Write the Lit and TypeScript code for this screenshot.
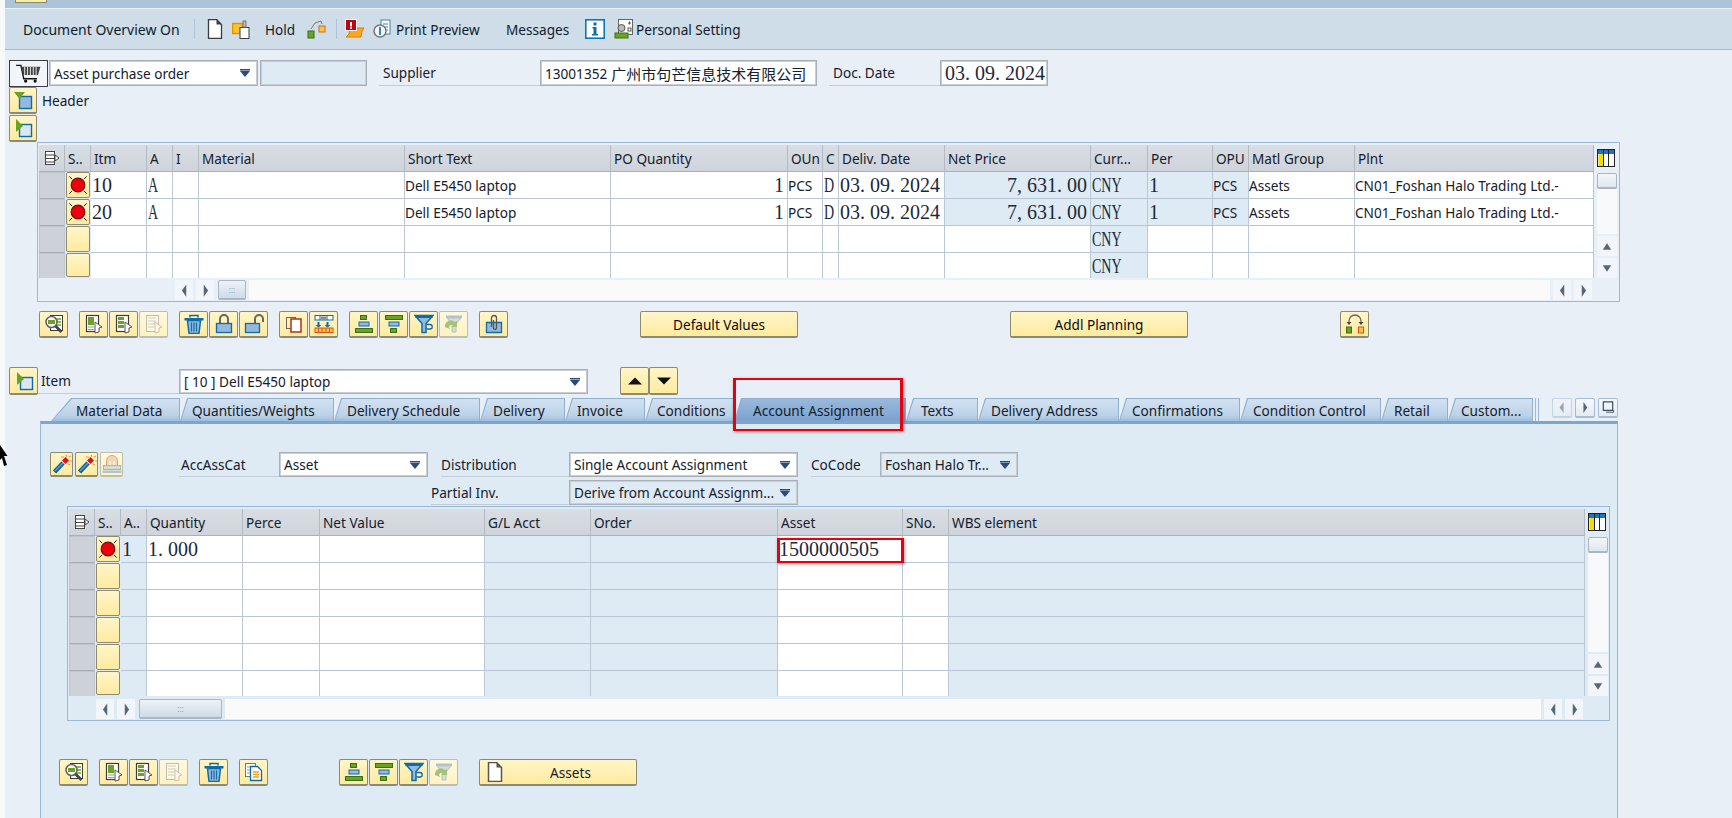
import { LitElement, css, html, TemplateResult } from "lit";
import { customElement } from "lit/decorators.js";

type Cell = { t: string; k?: "s" | "n" | "c"; r?: boolean; b?: boolean };
const s = (t: string, b = false): Cell => ({ t, k: "s", b });
const n = (t: string, b = false, r = false): Cell => ({ t, k: "n", b, r });
const c = (t: string, b = false): Cell => ({ t, k: "c", b });
const e = (b = false): Cell => ({ t: "", b });

const D = "#3c3c3c";
const G = "#6aa321";
const B = "#0f6ca6";
const L = "#93b9dd";

const wand = html`<svg viewBox="0 0 20 20"><path d="M2.500 18L11 9" stroke="#0f5f96" stroke-width="4.500"/><path d="M3 17l8-8" stroke="#5b9fd6" stroke-width="1.500"/><path d="M13.500 3l3.500 3.500-3.500 3.500-3.500-3.500z" fill="#e0101e"/><path d="M9 3h3M14 1l1 2M17 3l2-1M18 7h2M16 10l2 1" stroke="#f09a1a" stroke-width="1.100"/></svg>`;

const icons: Record<string, TemplateResult> = {
  doc: html`<svg viewBox="0 0 20 20"><path d="M3.500 .5h8l5 5v14h-13z" fill="#fff" stroke="${D}" stroke-width="1.300"/><path d="M11.500 .5l5 5h-5z" fill="${D}"/></svg>`,
  hold: html`<svg viewBox="0 0 20 20"><rect x=".5" y="4.500" width="10" height="10" fill="#fbc52b" stroke="#ef8a00" stroke-width="1.400"/><rect x="8" y="8.500" width="9" height="11" fill="#fff" stroke="${D}"/><rect x="11" y="2" width="3" height="6" fill="#bbb" stroke="#777"/></svg>`,
  flow: html`<svg viewBox="0 0 20 20"><rect x="1" y="12" width="6" height="7" fill="${G}" stroke="#356b1a"/><rect x="12" y="7" width="6" height="6" fill="#f9c544" stroke="#d8662a"/><path d="M4 10L8 4l6-2M14 2l1 3" fill="none" stroke="#777"/></svg>`,
  msg: html`<svg viewBox="0 0 20 20"><path d="M5 9h14l-2 3-1 6H1l3-3z" fill="#f7a81b" stroke="#e97a00"/><rect x=".5" y=".5" width="11" height="11" fill="#c40012" stroke="#fff"/><rect x="5" y="3" width="2" height="4.500" fill="#fff"/><rect x="5" y="8.300" width="2" height="1.600" fill="#fff"/></svg>`,
  print: html`<svg viewBox="0 0 20 20"><rect x="8" y="1" width="9" height="14" fill="#fff" stroke="#3d82ad"/><path d="M10 5h5M10 8h5M10 11h5" stroke="#3d82ad"/><circle cx="7" cy="12" r="6" fill="#f2f5f8" stroke="#777" stroke-width="1.500"/><path d="M7 8v8" stroke="#3d82ad" stroke-width="2"/></svg>`,
  info: html`<svg viewBox="0 0 20 20"><rect x=".8" y=".8" width="18.400" height="18.400" fill="#fff" stroke="#0a78b8" stroke-width="1.600"/><rect x="8.500" y="3.500" width="3" height="3" fill="#0a6fae"/><path d="M7.500 8h4v7h1.500v1.500h-6V15h1.500V9.500h-1z" fill="#0a6fae"/></svg>`,
  pers: html`<svg viewBox="0 0 20 20"><rect x="4.500" y=".5" width="14" height="15" fill="#fff" stroke="#666"/><rect x="1" y="14" width="13" height="5" fill="${G}" stroke="#3d6f1b"/><circle cx="7.500" cy="9" r="3.500" fill="#bbb" stroke="#555"/><path d="M14 4h3M15.500 2.500v3" stroke="#555"/><rect x="14" y="9" width="3" height="3" fill="none" stroke="#555"/></svg>`,
  cart: html`<svg viewBox="0 0 26 20"><path d="M0 1.500h5l3 14h14" fill="none" stroke="#111" stroke-width="1.400"/><path d="M5.500 3h20L23 11.500H7.500z" fill="#444"/><path d="M9 3v8.500M12 3v8.500M15 3v8.500M18 3v8.500M21 3v8.500" stroke="#eee"/><circle cx="10" cy="18" r="1.700" fill="#111"/><circle cx="20" cy="18" r="1.700" fill="#111"/></svg>`,
  head: html`<svg viewBox="0 0 20 20"><rect x="6.500" y="6.500" width="12" height="12" fill="${L}" stroke="${B}" stroke-width="1.400"/><path d="M1 2h11L6.500 9z" fill="${G}"/></svg>`,
  exp: html`<svg viewBox="0 0 20 20"><rect x="6.500" y="6.500" width="12" height="12" fill="#dbe8f4" stroke="${B}" stroke-width="1.400"/><path d="M3 1v13l7-6z" fill="${G}"/></svg>`,
  detail: html`<svg viewBox="0 0 20 20"><rect x="6.500" y="1.500" width="12" height="15" fill="#fff" stroke="${D}"/><path d="M12 5h5M12 8h5M12 11h5" stroke="${G}" stroke-width="1.400"/><circle cx="7.500" cy="8" r="5.500" fill="#fff" stroke="#666" stroke-width="1.600"/><rect x="4" y="6" width="7" height="4" fill="${G}"/><path d="M11.500 12l6 6" stroke="#444" stroke-width="2.800"/></svg>`,
  selAll: html`<svg viewBox="0 0 20 20"><rect x="2.500" y="1.500" width="12" height="16" fill="#fff" stroke="${D}" stroke-width="1.200"/><rect x="4" y="3" width="6" height="8" fill="${G}"/><path d="M4 13h6M4 15.500h6" stroke="#999"/><path d="M11 8l7 5-3 1v4l-4 1z" fill="#fff" stroke="#555"/></svg>`,
  selBlk: html`<svg viewBox="0 0 20 20"><rect x="2.500" y="1.500" width="12" height="16" fill="#fff" stroke="${D}" stroke-width="1.200"/><path d="M4 3h6v3H4zM4 7h6v3H4zM4 11h6v3H4z" fill="${G}"/><path d="M11 8l7 5-3 1v4l-4 1z" fill="#fff" stroke="#555"/></svg>`,
  selOff: html`<svg viewBox="0 0 20 20" opacity=".45"><rect x="2.500" y="1.500" width="12" height="16" fill="#fff" stroke="#777"/><path d="M4 4h8M4 7h8M4 10h8M4 13h6" stroke="#999"/><path d="M11 8l7 5-3 1v4l-4 1z" fill="#fff" stroke="#888"/></svg>`,
  trash: html`<svg viewBox="0 0 20 20"><path d="M6 3.500V1.500h8v2" fill="none" stroke="${B}" stroke-width="1.500"/><path d="M.5 4h19v2.500H.5z" fill="${B}"/><path d="M3.500 6.500h13l-1.500 13H5z" fill="${L}" stroke="${B}" stroke-width="1.500"/><path d="M7.500 8.500v9M10 8.500v9M12.500 8.500v9" stroke="${B}" stroke-width="1.200"/></svg>`,
  lock: html`<svg viewBox="0 0 20 20"><path d="M6 10V5a4 4 0 018 0v5" fill="none" stroke="#666" stroke-width="2"/><rect x="2.500" y="9.500" width="15" height="9" fill="${L}" stroke="${B}" stroke-width="1.300"/></svg>`,
  unlock: html`<svg viewBox="0 0 20 20"><path d="M11 9V5a4 4 0 018 0v3" fill="none" stroke="#666" stroke-width="2"/><rect x="1.500" y="9.500" width="14" height="9" fill="${L}" stroke="${B}" stroke-width="1.300"/></svg>`,
  copy: html`<svg viewBox="0 0 20 20"><rect x="2.500" y="3.500" width="9" height="11" fill="none" stroke="#666"/><rect x="7" y="5" width="10" height="13" fill="#fff" stroke="#b2321a" stroke-width="1.500"/></svg>`,
  matrix: html`<svg viewBox="0 0 20 20"><rect x="1" y="1.500" width="18" height="4.500" fill="#fff" stroke="${B}"/><path d="M6 1.500v4.500M13 1.500v4.500" stroke="${B}"/><rect x="7" y="2.500" width="5" height="3" fill="#888"/><path d="M3.500 8v3h-2l3 2.500 3-2.500h-2V8zM12.500 8v3h-2l3 2.500 3-2.500h-2V8z" fill="${B}"/><rect x="1" y="14" width="18" height="4.500" fill="#f9c544" stroke="#d8521a"/><path d="M4.500 14v4.500M8 14v4.500M12 14v4.500M15.500 14v4.500" stroke="#d8521a"/></svg>`,
  asc: html`<svg viewBox="0 0 20 20"><rect x="6.500" y="1.500" width="6" height="4" fill="${G}" stroke="#3d6f1b"/><rect x="5" y="8" width="10" height="4" fill="${L}" stroke="${B}"/><rect x="1.500" y="14.500" width="17" height="4" fill="${G}" stroke="#3d6f1b"/></svg>`,
  desc: html`<svg viewBox="0 0 20 20"><rect x="1.500" y="1.500" width="17" height="4" fill="${G}" stroke="#3d6f1b"/><rect x="5" y="8" width="10" height="4" fill="${L}" stroke="${B}"/><rect x="6.500" y="14.500" width="6" height="4" fill="${G}" stroke="#3d6f1b"/></svg>`,
  filter: html`<svg viewBox="0 0 20 20"><path d="M1 1.500h18l-7 8v9H8v-9z" fill="${L}" stroke="${B}" stroke-width="1.500"/><path d="M1.500 1.500h17v2.500h-17z" fill="${B}"/><path d="M12.500 10.500h3.500a2 2 0 010 4.500h-3.500" fill="none" stroke="${B}" stroke-width="1.300"/></svg>`,
  filterOff: html`<svg viewBox="0 0 20 20" opacity=".6"><path d="M2 1.500h16v2.500H2z" fill="#7ea4bd"/><path d="M3 4h14l-5 6v8H8v-8z" fill="#b5cfe2" stroke="#7ea4bd"/><path d="M1 13a6 6 0 0110-5l2-1v6H7l2-2a3 3 0 00-4 2l1 2z" fill="#6f9f3f"/></svg>`,
  clip: html`<svg viewBox="0 0 20 20"><path d="M2.500 8.500h15v10h-15z" fill="${L}" stroke="${B}" stroke-width="1.300"/><path d="M7.500 13V4a2.500 2.500 0 015 0v10a1.500 1.500 0 01-3 0V6" fill="none" stroke="#555" stroke-width="1.300"/></svg>`,
  resp: html`<svg viewBox="0 0 20 20"><path d="M4 10V7a6 6 0 0112 0v3" fill="none" stroke="#666" stroke-width="1.300"/><path d="M1.500 8h5L4 11zM13.500 8h5L16 11z" fill="#444"/><rect x="1.500" y="13" width="5" height="6" fill="${G}" stroke="#3d6f1b"/><rect x="13.500" y="13" width="5" height="6" fill="#f9c544" stroke="#d8521a"/></svg>`,
  newDoc: html`<svg viewBox="0 0 20 20"><path d="M3.500 .5h8l5 5v14h-13z" fill="#fff" stroke="#555" stroke-width="1.500"/><path d="M11.500 .5l5 5h-5z" fill="#555"/></svg>`,
  copyDoc: html`<svg viewBox="0 0 20 20"><rect x="1.500" y="1.500" width="10" height="13" fill="#fff" stroke="#777"/><path d="M3 5h6M3 8h6M3 11h6" stroke="#999"/><path d="M6.500 4.500h7l4 4v10h-11z" fill="#fff" stroke="${B}" stroke-width="1.300"/><path d="M9 10h6M9 12.500h6M9 15h6" stroke="#f0a020" stroke-width="1.400"/></svg>`,
  wand,
  stamp: html`<svg viewBox="0 0 20 20" opacity=".7"><path d="M4.500 12V7a5.500 5.500 0 0111 0v5" fill="#f3c4a4" stroke="#c9885c"/><path d="M8 12V7M12 12V7" stroke="#fff" stroke-width="1.500"/><rect x="1.500" y="11.500" width="17" height="4" fill="#c8d4dc" stroke="#8a9aa8"/><rect x=".5" y="16.500" width="19" height="2.500" fill="#8fb4d2"/></svg>`,
  cols: html`<svg viewBox="0 0 18 18"><rect x=".5" y=".5" width="17" height="17" fill="#fff" stroke="#222"/><rect x="1" y="1" width="16" height="4" fill="#1f74bd"/><rect x="1.500" y="5" width="4.500" height="12" fill="#f4dc00"/><path d="M6.500 1v16M11.500 1v16" stroke="#222"/></svg>`,
  status: html`<svg viewBox="0 0 22 24"><path d="M1.500 2.500l3 3M20.500 2.500l-3 3M1.500 21.500l3-3M20.500 21.500l-3-3" stroke="#222" stroke-width="1.100"/><circle cx="11" cy="12" r="7.500" fill="#f0000f" stroke="#6e0a0f" stroke-width="1.300"/></svg>`,
  dd: html`<svg viewBox="0 0 10 8"><rect width="10" height="1.500" fill="#2b4a78"/><path d="M0 2h10L5 8z" fill="#2b4a78"/></svg>`,
  up: html`<svg viewBox="0 0 20 20"><path d="M10 6.500l7 7H3z" fill="#111"/></svg>`,
  down: html`<svg viewBox="0 0 20 20"><path d="M3 6.500h14l-7 7z" fill="#111"/></svg>`,
  sl: html`<svg viewBox="0 0 8 14"><path d="M6 0v14L1 7z" fill="#56677a"/></svg>`,
  sr: html`<svg viewBox="0 0 8 14"><path d="M2 0v14l5-7z" fill="#56677a"/></svg>`,
  su: html`<svg viewBox="0 0 12 8"><path d="M6 0l5 8H1z" fill="#56677a"/></svg>`,
  sd: html`<svg viewBox="0 0 12 8"><path d="M1 0h10L6 8z" fill="#56677a"/></svg>`,
  head2: html`<svg viewBox="0 0 16 16"><rect x="1.500" y="1.500" width="9" height="13" fill="#fff" stroke="#444"/><path d="M1.500 5h9M1.500 8.500h9M1.500 12h9" stroke="#444"/><path d="M11 5l4 3-4 3z" fill="#fff" stroke="#444"/></svg>`,
  tabList: html`<svg viewBox="0 0 16 16"><path d="M3 2h10v9H3z" fill="none" stroke="#3d4f63" stroke-width="1.300"/><path d="M6 13h8v-2" fill="none" stroke="#3d4f63"/></svg>`,
};

const COLS1 = [26, 26, 56, 26, 26, 206, 206, 177, 35, 16, 106, 146, 57, 65, 36, 106, 239];
const HEAD1 = ["S..", "Itm", "A", "I", "Material", "Short Text", "PO Quantity", "OUn", "C", "Deliv. Date", "Net Price", "Curr...", "Per", "OPU", "Matl Group", "Plnt"];
const item = (no: string): Cell[] => [
  n(no), c("A"), e(), e(), s("Dell E5450 laptop"), n("1", false, true), s("PCS"), c("D"),
  n("03. 09. 2024"), n("7, 631. 00", true, true), c("CNY", true), n("1", true), s("PCS", true),
  s("Assets"), s("CN01_Foshan Halo Trading Ltd.-"),
];
const blank1 = (): Cell[] => HEAD1.slice(1).map((h) => (h === "Curr..." ? c("CNY", true) : e()));
const ROWS1 = [
  { status: true, cells: item("10") },
  { status: true, cells: item("20") },
  { status: false, cells: blank1() },
  { status: false, cells: blank1() },
];

const COLS2 = [26, 26, 26, 96, 77, 165, 106, 187, 125, 46, 636];
const HEAD2 = ["S..", "A..", "Quantity", "Perce", "Net Value", "G/L Acct", "Order", "Asset", "SNo.", "WBS element"];
const blank2 = (): Cell[] => [e(true), e(), e(), e(), e(true), e(true), e(), e(), e(true)];
const ROWS2 = [
  {
    status: true,
    cells: [n("1", true), n("1. 000"), e(), e(), e(true), e(true), n("1500000505"), e(), e(true)],
  },
  ...[0, 1, 2, 3, 4].map(() => ({ status: false, cells: blank2() })),
];

const TABS = [
  ["Material Data", 129, 24],
  ["Quantities/Weights", 154, 11],
  ["Delivery Schedule", 146, 12],
  ["Delivery", 85, 12],
  ["Invoice", 80, 11],
  ["Conditions", 89, 11],
  ["Account Assignment", 172, 18],
  ["Texts", 72, 14],
  ["Delivery Address", 141, 12],
  ["Confirmations", 121, 12],
  ["Condition Control", 141, 12],
  ["Retail", 67, 12],
  ["Custom...", 85, 12],
] as const;

@customElement("app-root")
export class AppRoot extends LitElement {
  static styles = css`
    :host {
      display: block;
      position: relative;
      width: 1732px;
      height: 818px;
      overflow: hidden;
      background: #f7f9fb;
      color: #14202c;
      font-family: "Noto Sans", "Noto Sans CJK SC", sans-serif;
      font-size: 13.6px;
    }
    svg {
      display: block;
      width: 100%;
      height: 100%;
    }
    .page {
      margin-left: 5px;
      height: 818px;
      background: #e8eff7;
    }
    .topbar {
      height: 8px;
      background: #adc3da;
      padding-left: 10px;
    }
    .topstub {
      width: 32px;
      height: 3px;
      background: #fdeca6;
      border: 1px solid #8c8a70;
      border-top: 0;
      box-sizing: border-box;
    }
    .toolbar {
      display: grid;
      grid-template-columns: 171px 11px 27px 33px 42px 29px 9px 28px 23px 110px 79px 29px 22px auto;
      align-items: center;
      height: 40px;
      margin-top: 1px;
      padding-left: 18px;
      background: #cedde8;
      border-bottom: 1px solid #a9b8c5;
      color: #0e1c2c;
      white-space: nowrap;
    }
    .toolbar .first {
      font-size: 14px;
    }
    .tbi {
      width: 20px;
      height: 20px;
    }
    .tsep {
      width: 1px;
      height: 20px;
      background: #aec4d8;
    }

    .docrow {
      display: flex;
      height: 27px;
      margin-top: 10px;
      padding-left: 4px;
    }
    .cartbtn {
      width: 39px;
      height: 27px;
      box-sizing: border-box;
      border: 1px solid #3a3f45;
      background: #f1f4f8;
      padding: 3px 5px;
      margin-right: 1px;
    }
    .field {
      display: flex;
      align-items: center;
      box-sizing: border-box;
      height: 26px;
      border: 1px solid #a9b0b8;
      outline: 1px solid #c9ced4;
      outline-offset: -2px;
      background: #fff;
      padding-left: 4px;
      white-space: nowrap;
      overflow: hidden;
      flex: none;
    }
    .field .val {
      flex: 1;
      overflow: hidden;
    }
    .field .ddarrow {
      width: 10px;
      height: 8px;
      margin: 0 7px 0 4px;
      flex: none;
    }
    .field.ro {
      background: #deeaf4;
    }
    .cjk {
      font-size: 15px;
      margin-left: 4px;
    }
    .w209 { width: 209px; margin-right: 2px; }
    .w107 { width: 107px; margin-right: 12px; }
    .w277 { width: 277px; margin-right: 12px; }
    .w108 { width: 108px; }
    .label {
      display: flex;
      align-items: center;
      box-sizing: border-box;
      height: 26px;
      padding-left: 4px;
      border-bottom: 1px solid #c3cdd8;
      flex: none;
    }
    .w161 { width: 161px; }
    .w111 { width: 111px; }
    .serif {
      font-family: "Liberation Serif", serif;
      font-size: 20px;
      line-height: 26px;
      color: #1b2a3a;
    }
    .btn {
      display: flex;
      align-items: center;
      justify-content: center;
      box-sizing: border-box;
      width: 29px;
      height: 27px;
      flex: none;
      border: 1px solid #8c8a70;
      border-bottom-width: 2px;
      border-radius: 2px;
      background: linear-gradient(#fff5c8, #ffeb9f);
    }
    .btn > .i {
      width: 20px;
      height: 20px;
    }
    .btn.off {
      border-color: #bfbea8;
      background: linear-gradient(#fff9e0, #fff2c4);
    }
    .btn.txt {
      color: #0c0c0c;
    }
    .hdrrow {
      display: flex;
      align-items: center;
      height: 27px;
      padding-left: 4px;
    }
    .hdrrow .btn {
      width: 28px;
      margin-right: 5px;
    }
    .hdr2 {
      height: 27px;
      margin-top: 1px;
      padding-left: 4px;
    }
    .hdr2 .btn {
      width: 28px;
    }

    .box {
      box-sizing: border-box;
      border: 1px solid #9bb9d6;
    }
    .box1 {
      width: 1583px;
      height: 160px;
      margin-left: 32px;
      padding: 2px 2px 0 1px;
    }
    .box2 {
      width: 1543px;
      height: 215px;
      margin: 1px 0 0 17px;
      padding: 2px 2px 0 1px;
    }
    .tblwrap {
      display: flex;
      gap: 3px;
    }
    .row {
      display: grid;
    }
    .hc {
      display: flex;
      align-items: center;
      box-sizing: border-box;
      height: 27px;
      padding-left: 3px;
      background: linear-gradient(#d9dde4, #cfd4dc);
      border-right: 1px solid #b4bac3;
      border-bottom: 1px solid #a9b1bb;
      white-space: nowrap;
      overflow: hidden;
    }
    .hc .corner {
      width: 16px;
      height: 16px;
    }
    .hc.c0 {
      padding-left: 5px;
    }
    .bc {
      display: flex;
      align-items: center;
      box-sizing: border-box;
      height: 27px;
      background: #fff;
      border-right: 1px solid #bcc7d6;
      border-bottom: 1px solid #b9c5d3;
      white-space: nowrap;
      overflow: hidden;
      padding-left: 0;
    }
    .bc.n {
      padding-left: 1px;
    }
    .bc.blue {
      background: #deeaf4;
    }
    .bc.right {
      justify-content: flex-end;
      padding: 0 3px 0 0;
    }
    .row.last .bc,
    .row.last .sel,
    .row.last .st {
      height: 25px;
      border-bottom: 0;
    }
    .sel {
      box-sizing: border-box;
      height: 27px;
      background: #cdd2d9;
      border: 1px solid #bfc5cc;
      border-bottom-color: #a6adb6;
    }
    .st {
      box-sizing: border-box;
      height: 27px;
      padding: 0 0 1px 1px;
      background: #deeaf4;
    }
    .st .btn {
      width: 24px;
      height: 100%;
      border-width: 1px;
      padding: 1px;
    }
    .squeeze {
      display: inline-block;
      transform: scaleX(0.7);
      transform-origin: left center;
    }
    .vs {
      display: flex;
      flex-direction: column;
      width: 20px;
      flex: none;
    }
    .vs .cfg {
      width: 18px;
      height: 18px;
      margin: 4px 0 6px;
      flex: none;
    }
    .vs .thumb {
      box-sizing: border-box;
      height: 16px;
      flex: none;
      border: 1px solid #a9b6c4;
      border-bottom-width: 2px;
      background: linear-gradient(#f4f7fa, #dde6ef);
      border-radius: 2px;
    }
    .vs .track {
      flex: 1;
      background: #f8f9fb;
    }
    .vs .sb {
      height: 20px;
      flex: none;
      margin-top: 2px;
      background: #f2f5f9;
      display: flex;
      align-items: center;
      justify-content: center;
    }
    .sb > span {
      display: block;
      width: 10px;
      height: 7px;
    }
    .hs {
      display: flex;
      box-sizing: border-box;
      height: 20px;
      gap: 3px;
      margin-top: 2px;
    }
    .hs .sb {
      width: 18px;
      flex: none;
      background: #f2f5f9;
      display: flex;
      align-items: center;
      justify-content: center;
    }
    .hs .sb > span {
      width: 7px;
      height: 13px;
    }
    .hs .thumb {
      box-sizing: border-box;
      flex: none;
      margin-left: 1px;
      border: 1px solid #a9b6c4;
      border-bottom-width: 2px;
      border-radius: 2px;
      background: linear-gradient(#eef2f6, #cfdbe6);
      display: flex;
      align-items: center;
      justify-content: center;
      color: #8a98a6;
      font-size: 8px;
      line-height: 8px;
    }
    .hs .track {
      flex: 1;
      background: #fafafa;
    }
    .hs1 { padding: 0 2px 0 136px; width: 1555px; }
    .hs2 { padding: 0 2px 0 27px; width: 1516px; margin-top: 3px; }
    .hs1 .thumb { width: 28px; }
    .hs2 .thumb { width: 83px; }

    .tools {
      display: flex;
      margin-top: 9px;
      margin-left: 34px;
    }
    .grp {
      display: flex;
      gap: 1px;
      margin-right: 11px;
    }
    .tools .txt {
      width: 158px;
    }
    .tools .txt.def {
      margin-left: 121px;
    }
    .tools .txt.addl {
      width: 178px;
      margin-left: 212px;
    }
    .tools .resp {
      margin-left: 152px;
    }
    .itemrow {
      display: flex;
      height: 28px;
      margin-top: 29px;
      margin-left: 4px;
    }
    .itemrow .btn {
      height: 28px;
    }
    .itemrow .label {
      width: 141px;
      height: 27px;
      padding-left: 3px;
    }
    .itemrow .field {
      width: 409px;
      height: 25px;
      margin: 2px 32px 0 0;
    }
    .tabs {
      display: flex;
      height: 23px;
      margin: 3px 0 0 46px;
    }
    .tab {
      box-sizing: border-box;
      padding: 1px 1px 0;
      background: #8fb0d0;
      flex: none;
      clip-path: polygon(var(--sl) 0, 100% 0, 100% 100%, 0 100%);
    }
    .tabin {
      display: flex;
      align-items: center;
      height: 100%;
      background: linear-gradient(#d2e1f0, #bcd2e8 75%, #9dbcda);
      clip-path: polygon(var(--sl) 0, 100% 0, 100% 100%, 0 100%);
      white-space: nowrap;
      box-sizing: border-box;
    }
    .tab.on .tabin {
      background: linear-gradient(#9ab9dc, #7aa2cf);
    }
    .tabend {
      width: 5px;
      margin-right: 13px;
      flex: none;
      border-right: 1px solid #9bb9d6;
      box-shadow: inset -2px 0 0 #e8eff7, inset -3px 0 0 #9bb9d6;
    }
    .tabnav {
      display: flex;
      gap: 3px;
    }
    .nb {
      box-sizing: border-box;
      width: 20px;
      height: 20px;
      border: 1px solid #a7bdd3;
      border-bottom-width: 2px;
      border-radius: 2px;
      background: linear-gradient(#f6f9fc, #e2ebf4);
      padding: 3px 5px;
    }
    .nb.dim {
      opacity: 0.55;
    }
    .nb.list {
      padding: 1px;
    }
    .panel {
      box-sizing: border-box;
      width: 1578px;
      height: 397px;
      margin-left: 35px;
      border: 1px solid #9bb9d6;
      border-top: 3px solid #7ea5cc;
      border-bottom: 0;
      background: #deeaf4;
      padding-top: 28px;
      padding-left: 9px;
    }
    .assign {
      display: grid;
      grid-template-columns: 129px 100px 149px 13px 128px 229px 13px 69px 138px;
      grid-auto-rows: 25px;
      row-gap: 3px;
    }
    .wands {
      display: flex;
      gap: 2px;
    }
    .wands .btn {
      width: 23px;
      height: 25px;
    }
    .assign .label,
    .assign .field {
      height: 25px;
      width: auto;
    }
    .assign .label {
      padding-left: 0;
    }
    .assign .label.acc {
      padding-left: 2px;
    }
    .partial {
      grid-column: 4 / 6;
      margin-left: 3px;
    }
    .g6 {
      grid-column: 6;
    }
    .g5 {
      grid-column: 5;
    }
    .g8 {
      grid-column: 8;
    }
    .tools.t2 {
      margin: 38px 0 0 9px;
    }
    .tools.t2 .gap71 {
      margin-right: 71px;
    }
    .tools.t2 .gap21 {
      margin-right: 21px;
    }
    .assets {
      display: grid;
      grid-template-columns: 20px 1fr;
      align-items: center;
      width: 158px;
      padding-left: 5px;
    }
    .assets span:last-child {
      text-align: center;
    }
    .mark {
      position: absolute;
      box-sizing: border-box;
      border: 2px solid #e8000f;
      box-shadow: 1px 1px 3px rgba(0, 0, 0, 0.4);
      pointer-events: none;
    }
    .mark.tab-mark {
      left: 733px;
      top: 378px;
      width: 170px;
      height: 53px;
      border-width: 2px 3px;
    }
    .mark.asset-mark {
      left: 777px;
      top: 538px;
      width: 127px;
      height: 25px;
      border-width: 2px 3px;
    }
    .pointer {
      position: absolute;
      left: 0;
      top: 445px;
      width: 8px;
      height: 21px;
    }
  `;

  private ic(name: string) {
    return html`<span class="i">${icons[name]}</span>`;
  }

  private btn(name: string, off = false) {
    return html`<div class="btn ${off ? "off" : ""}">${this.ic(name)}</div>`;
  }

  private cell(x: Cell) {
    const cls = `bc ${x.b ? "blue" : ""} ${x.r ? "right" : ""} ${x.k === "s" ? "" : "n"}`;
    if (x.k === "n") return html`<div class=${cls}><span class="serif">${x.t}</span></div>`;
    if (x.k === "c") return html`<div class=${cls}><span class="serif squeeze">${x.t}</span></div>`;
    return html`<div class=${cls}>${x.t}</div>`;
  }

  private grid(
    cols: number[],
    head: string[],
    rows: { status: boolean; cells: Cell[] }[],
    scrollCls: string,
  ) {
    const tpl = `grid-template-columns:${cols.map((w) => w + "px").join(" ")}`;
    return html`
      <div class="tblwrap">
        <div>
          <div class="row" style=${tpl}>
            <div class="hc c0"><span class="corner">${icons.head2}</span></div>
            ${head.map((h) => html`<div class="hc">${h}</div>`)}
          </div>
          ${rows.map(
            (r, i) => html`<div class="row ${i === rows.length - 1 ? "last" : ""}" style=${tpl}>
              <div class="sel"></div>
              <div class="st"><div class="btn">${r.status ? icons.status : ""}</div></div>
              ${r.cells.map((x) => this.cell(x))}
            </div>`,
          )}
        </div>
        <div class="vs">
          <div class="cfg">${icons.cols}</div>
          <div class="thumb"></div>
          <div class="track"></div>
          <div class="sb"><span>${icons.su}</span></div>
          <div class="sb"><span>${icons.sd}</span></div>
        </div>
      </div>
      <div class="hs ${scrollCls}">
        <div class="sb"><span>${icons.sl}</span></div>
        <div class="sb"><span>${icons.sr}</span></div>
        <div class="thumb">:::</div>
        <div class="track"></div>
        <div class="sb"><span>${icons.sl}</span></div>
        <div class="sb"><span>${icons.sr}</span></div>
      </div>
    `;
  }

  private dd(text: string, cls: string) {
    return html`<div class="field ${cls}">
      <span class="val">${text}</span><span class="ddarrow">${icons.dd}</span>
    </div>`;
  }

  render() {
    return html`
      <div class="page">
        <div class="topbar"><div class="topstub"></div></div>
        <div class="toolbar">
          <span class="first">Document Overview On</span>
          <span class="tsep"></span>
          <span class="tbi">${icons.doc}</span>
          <span class="tbi">${icons.hold}</span>
          <span>Hold</span>
          <span class="tbi">${icons.flow}</span>
          <span class="tsep"></span>
          <span class="tbi">${icons.msg}</span>
          <span class="tbi">${icons.print}</span>
          <span>Print Preview</span>
          <span>Messages</span>
          <span class="tbi">${icons.info}</span>
          <span class="tbi">${icons.pers}</span>
          <span>Personal Setting</span>
        </div>

        <div class="docrow">
          <div class="cartbtn">${icons.cart}</div>
          ${this.dd("Asset purchase order", "w209")}
          <div class="field ro w107"></div>
          <div class="label w161">Supplier</div>
          <div class="field w277">13001352<span class="cjk">广州市句芒信息技术有限公司</span></div>
          <div class="label w111">Doc. Date</div>
          <div class="field w108 serif">03. 09. 2024</div>
        </div>
        <div class="hdrrow">${this.btn("head")}<span>Header</span></div>
        <div class="hdr2">${this.btn("exp")}</div>

        <div class="box box1">${this.grid(COLS1, HEAD1, ROWS1, "hs1")}</div>

        <div class="tools">
          <div class="grp">${this.btn("detail")}</div>
          <div class="grp">${this.btn("selAll")}${this.btn("selBlk")}${this.btn("selOff", true)}</div>
          <div class="grp">${this.btn("trash")}${this.btn("lock")}${this.btn("unlock")}</div>
          <div class="grp">${this.btn("copy")}${this.btn("matrix")}</div>
          <div class="grp">${this.btn("asc")}${this.btn("desc")}${this.btn("filter")}${this.btn("filterOff", true)}</div>
          <div class="grp">${this.btn("clip")}</div>
          <div class="btn txt def">Default Values</div>
          <div class="btn txt addl">Addl Planning</div>
          <div class="btn resp">${this.ic("resp")}</div>
        </div>

        <div class="itemrow">
          ${this.btn("exp")}
          <div class="label">Item</div>
          ${this.dd("[ 10 ] Dell E5450 laptop", "")}
          ${this.btn("up")}${this.btn("down")}
        </div>

        <div class="tabs">
          ${TABS.map(
            ([t, w, pad], i) => html`<div
              class="tab ${t === "Account Assignment" ? "on" : ""}"
              style="width:${w}px;--sl:${i === 0 ? 20 : 7}px"
            >
              <div class="tabin" style="padding-left:${pad}px">${t}</div>
            </div>`,
          )}
          <div class="tabend"></div>
          <div class="tabnav">
            <div class="nb dim">${icons.sl}</div>
            <div class="nb">${icons.sr}</div>
            <div class="nb list">${icons.tabList}</div>
          </div>
        </div>

        <div class="panel">
          <div class="assign">
            <div class="wands">${this.btn("wand")}${this.btn("wand")}${this.btn("stamp", true)}</div>
            <div class="label acc">AccAssCat</div>
            ${this.dd("Asset", "")}
            <div class="label g5">Distribution</div>
            ${this.dd("Single Account Assignment", "")}
            <div class="label g8">CoCode</div>
            ${this.dd("Foshan Halo Tr...", "ro")}
            <div class="label partial">Partial Inv.</div>
            ${this.dd("Derive from Account Assignm...", "ro g6")}
          </div>

          <div class="box box2">${this.grid(COLS2, HEAD2, ROWS2, "hs2")}</div>

          <div class="tools t2">
            <div class="grp">${this.btn("detail")}</div>
            <div class="grp">${this.btn("selAll")}${this.btn("selBlk")}${this.btn("selOff", true)}</div>
            <div class="grp">${this.btn("trash")}</div>
            <div class="grp gap71">${this.btn("copyDoc")}</div>
            <div class="grp gap21">${this.btn("asc")}${this.btn("desc")}${this.btn("filter")}${this.btn("filterOff", true)}</div>
            <div class="btn assets">${this.ic("newDoc")}<span>Assets</span></div>
          </div>
        </div>
      </div>

      <div class="mark tab-mark"></div>
      <div class="mark asset-mark"></div>
      <svg class="pointer" viewBox="0 0 8 21"><path d="M0 0l7.500 11H4l3 9-3 1-2-8-2 2z" fill="#000"/></svg>
    `;
  }
}

declare global {
  interface HTMLElementTagNameMap {
    "app-root": AppRoot;
  }
}
